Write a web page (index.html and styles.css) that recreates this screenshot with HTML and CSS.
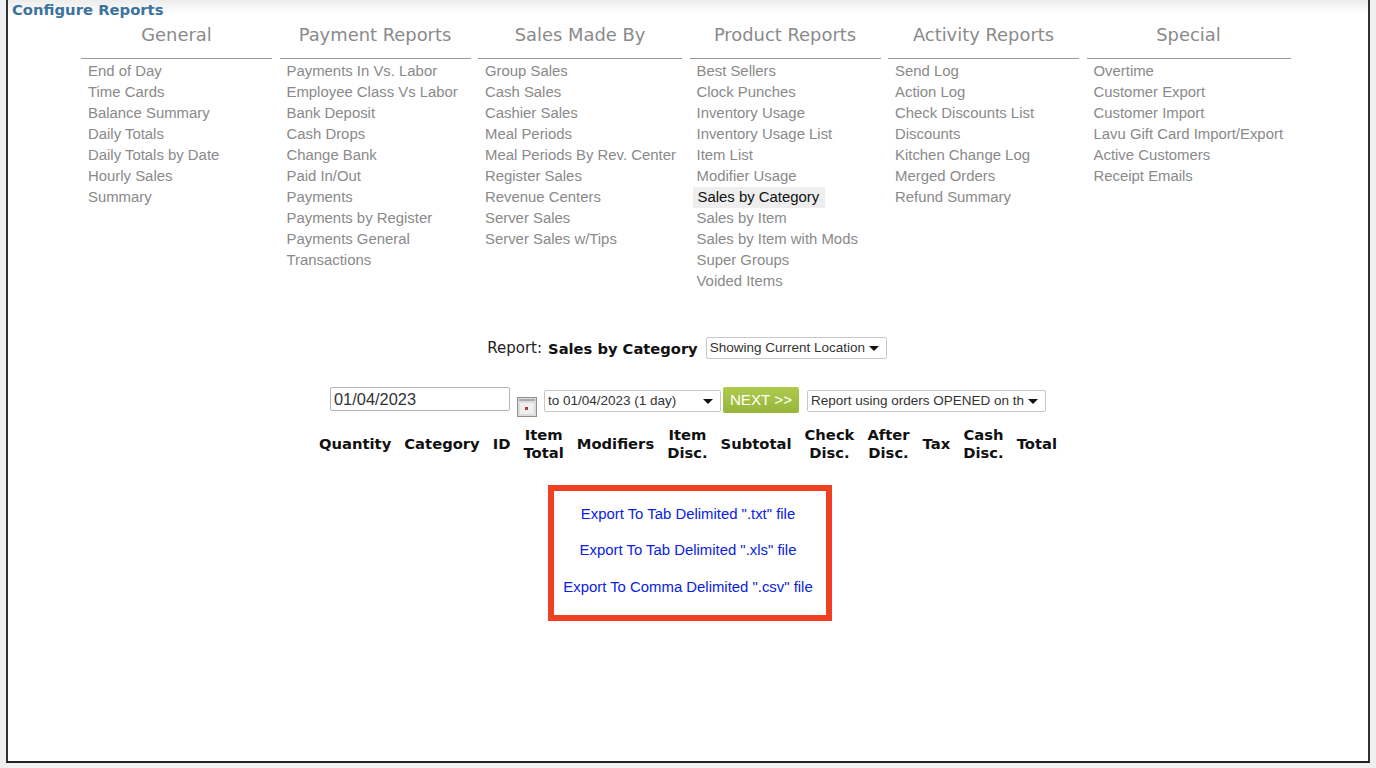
FILE: index.html
```html
<!DOCTYPE html>
<html lang="en">
<head>
    <meta charset="UTF-8">
    <title>Configure Reports</title>
    <link rel="stylesheet" href="styles.css">
</head>
<body>
    <div class="frame">
        <div class="page-title">Configure Reports</div>

        <div class="report-columns">
            <div class="report-col">
                <div class="col-title">General</div>
                <div class="col-links">
                    <a>End of Day</a>
                    <a>Time Cards</a>
                    <a>Balance Summary</a>
                    <a>Daily Totals</a>
                    <a>Daily Totals by Date</a>
                    <a>Hourly Sales</a>
                    <a>Summary</a>
                </div>
            </div>
            <div class="report-col">
                <div class="col-title">Payment Reports</div>
                <div class="col-links">
                    <a>Payments In Vs. Labor</a>
                    <a>Employee Class Vs Labor</a>
                    <a>Bank Deposit</a>
                    <a>Cash Drops</a>
                    <a>Change Bank</a>
                    <a>Paid In/Out</a>
                    <a>Payments</a>
                    <a>Payments by Register</a>
                    <a>Payments General</a>
                    <a>Transactions</a>
                </div>
            </div>
            <div class="report-col wide">
                <div class="col-title">Sales Made By</div>
                <div class="col-links">
                    <a>Group Sales</a>
                    <a>Cash Sales</a>
                    <a>Cashier Sales</a>
                    <a>Meal Periods</a>
                    <a>Meal Periods By Rev. Center</a>
                    <a>Register Sales</a>
                    <a>Revenue Centers</a>
                    <a>Server Sales</a>
                    <a>Server Sales w/Tips</a>
                </div>
            </div>
            <div class="report-col">
                <div class="col-title">Product Reports</div>
                <div class="col-links">
                    <a>Best Sellers</a>
                    <a>Clock Punches</a>
                    <a>Inventory Usage</a>
                    <a>Inventory Usage List</a>
                    <a>Item List</a>
                    <a>Modifier Usage</a>
                    <a class="selected">Sales by Category</a>
                    <a>Sales by Item</a>
                    <a>Sales by Item with Mods</a>
                    <a>Super Groups</a>
                    <a>Voided Items</a>
                </div>
            </div>
            <div class="report-col">
                <div class="col-title">Activity Reports</div>
                <div class="col-links">
                    <a>Send Log</a>
                    <a>Action Log</a>
                    <a>Check Discounts List</a>
                    <a>Discounts</a>
                    <a>Kitchen Change Log</a>
                    <a>Merged Orders</a>
                    <a>Refund Summary</a>
                </div>
            </div>
            <div class="report-col wide">
                <div class="col-title">Special</div>
                <div class="col-links">
                    <a>Overtime</a>
                    <a>Customer Export</a>
                    <a>Customer Import</a>
                    <a>Lavu Gift Card Import/Export</a>
                    <a>Active Customers</a>
                    <a>Receipt Emails</a>
                </div>
            </div>
        </div>

        <div class="report-line">
            <span class="report-label">Report:</span>
            <span class="report-name">Sales by Category</span>
            <div class="fake-select location-select"><span>Showing Current Location</span></div>
        </div>

        <div class="date-line">
            <div class="date-input">01/04/2023</div>
            <svg class="cal-icon" width="20" height="20" viewBox="0 0 20 20">
                <rect x="0.5" y="0.5" width="19" height="19" fill="#dcdcdc" stroke="#8f8f8f"/>
                <rect x="2" y="2" width="16" height="2" fill="#aaaaaa"/>
                <rect x="3" y="6" width="14" height="11" fill="#efefef"/>
                <rect x="8" y="10" width="3" height="3" fill="#b03a3a"/>
            </svg>
            <div class="fake-select range-select"><span>to 01/04/2023 (1 day)</span></div>
            <div class="next-btn">NEXT &gt;&gt;</div>
            <div class="fake-select mode-select"><span>Report using orders OPENED on th</span></div>
        </div>

        <div class="table-head">
            <div>Quantity</div>
            <div>Category</div>
            <div>ID</div>
            <div>Item<br>Total</div>
            <div>Modifiers</div>
            <div>Item<br>Disc.</div>
            <div>Subtotal</div>
            <div>Check<br>Disc.</div>
            <div>After<br>Disc.</div>
            <div>Tax</div>
            <div>Cash<br>Disc.</div>
            <div>Total</div>
        </div>

        <div class="export-box">
            <a>Export To Tab Delimited ".txt" file</a>
            <a>Export To Tab Delimited ".xls" file</a>
            <a>Export To Comma Delimited ".csv" file</a>
        </div>
    </div>
</body>
</html>
```

FILE: styles.css
```css
html, body {
    margin: 0;
    height: 768px;
    overflow: hidden;
}

body {
    background-color: #eef0f2;
    font-family: "Liberation Sans", Arial, sans-serif;
}

.frame {
    box-sizing: border-box;
    height: 763px;
    margin: 0 6px;
    border-left: 2px solid #333;
    border-right: 2px solid #333;
    border-bottom: 2px solid #222;
    background: linear-gradient(#ececec, #ffffff 14px);
}

.page-title {
    height: 20px;
    line-height: 20px;
    padding-left: 4px;
    font-family: "DejaVu Sans", sans-serif;
    font-size: 14.8px;
    font-weight: bold;
    color: #3b739f;
}

.report-columns {
    display: flex;
    gap: 7.5px;
    padding-left: 73px;
}

.report-col {
    width: 191px;
}

.report-col.wide {
    width: 204px;
}

.col-title {
    height: 38px;
    line-height: 30px;
    border-bottom: 1px solid #999;
    text-align: center;
    font-family: "DejaVu Sans", sans-serif;
    font-size: 17.9px;
    color: #8a8a8a;
}

.col-links {
    padding-top: 2px;
}

.col-links a {
    display: block;
    width: fit-content;
    height: 21px;
    line-height: 21px;
    padding: 0 5px 0 7px;
    font-size: 14.9px;
    white-space: nowrap;
    color: #8a8a8a;
}

.col-links a.selected {
    margin-left: 3px;
    padding: 0 6px 0 5px;
    background-color: #eeeeee;
    color: #111;
}

.report-line {
    display: flex;
    justify-content: center;
    align-items: center;
    gap: 5px;
    height: 24px;
    margin-top: 44px;
    padding-right: 2px;
    font-family: "DejaVu Sans", sans-serif;
    font-size: 14.7px;
    color: #222;
}

.report-label {
    font-size: 15px;
    margin-right: 1px;
}

.report-name {
    font-weight: bold;
    color: #111;
    margin-right: 3px;
}

.fake-select {
    box-sizing: border-box;
    position: relative;
    height: 22px;
    line-height: 20px;
    padding-left: 3px;
    border: 1px solid #c8c8c8;
    border-radius: 2px;
    background-color: #fff;
    font-family: "Liberation Sans", Arial, sans-serif;
    font-size: 13.5px;
    color: #333;
    white-space: nowrap;
}

.fake-select span {
    display: block;
}

.fake-select::after {
    content: "";
    position: absolute;
    top: 8px;
    right: 7px;
    border-left: 5px solid transparent;
    border-right: 5px solid transparent;
    border-top: 5px solid #111;
}

.location-select {
    width: 181px;
}

.date-line {
    display: flex;
    justify-content: center;
    align-items: flex-start;
    height: 30px;
    margin-top: 27px;
}

.date-input {
    box-sizing: border-box;
    width: 180px;
    height: 24px;
    line-height: 22px;
    padding-left: 3px;
    margin-right: 7px;
    border: 1px solid #b5b5b5;
    border-radius: 2px;
    font-size: 16.4px;
    color: #333;
}

.cal-icon {
    margin: 10px 7px 0 0;
}

.range-select {
    width: 177px;
    margin: 3px 2px 0 0;
}

.next-btn {
    box-sizing: border-box;
    width: 76px;
    height: 26px;
    line-height: 26px;
    margin-right: 8px;
    border-radius: 2px;
    background: linear-gradient(#aecb4e, #96b53a);
    text-align: center;
    font-size: 15.2px;
    color: #fff;
}

.mode-select {
    width: 239px;
    margin-top: 3px;
}

.table-head {
    display: flex;
    justify-content: center;
    align-items: center;
    gap: 13px;
    margin-top: 9px;
    height: 36px;
    line-height: 18px;
    text-align: center;
    font-family: "DejaVu Sans", sans-serif;
    font-size: 14.75px;
    font-weight: bold;
    color: #111;
}

.export-box {
    box-sizing: border-box;
    display: flex;
    flex-direction: column;
    justify-content: center;
    gap: 18px;
    width: 284px;
    height: 136px;
    margin: 23px 0 0 540px;
    padding: 0 4px 5px 0;
    border: 6px solid #ef4024;
    text-align: center;
    font-size: 14.9px;
    line-height: 18.5px;
    color: #0a22e0;
}

.export-box a {
    display: block;
}
```
